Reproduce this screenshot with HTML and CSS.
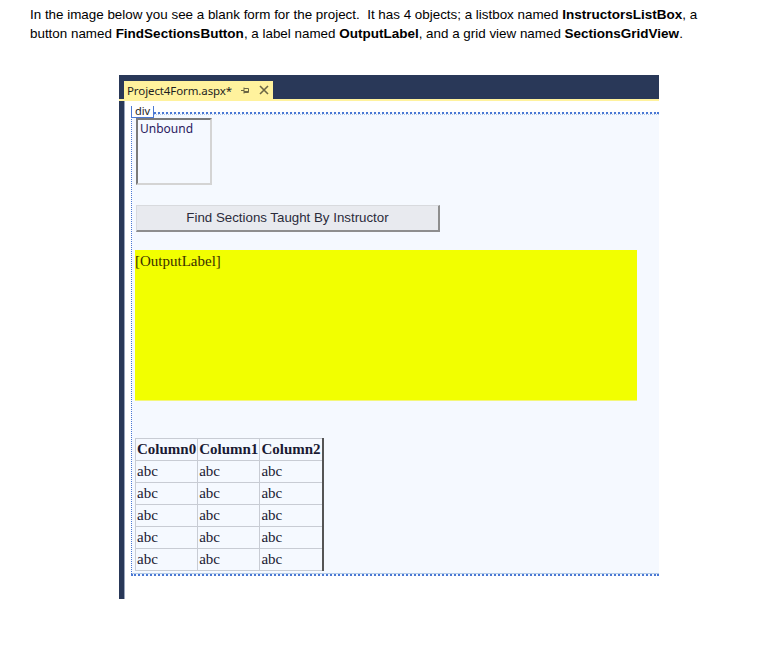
FILE: index.html
```
<!DOCTYPE html>
<html>
<head>
<meta charset="utf-8">
<link rel="stylesheet" href="styles.css">
</head>
<body>
<p class="intro">In the image below you see a blank form for the project.&nbsp; It has 4 objects; a listbox named <b>InstructorsListBox</b>, a<br>button named <b>FindSectionsButton</b>, a label named <b>OutputLabel</b>, and a grid view named <b>SectionsGridView</b>.</p>
<div class="frame">
  <div class="topbar">
    <div class="tab">
      <span class="tab-title">Project4Form.aspx*</span>
      <svg class="pin" width="9" height="9" viewBox="0 0 9 9"><path d="M0 4.5H3M3 1.5V7.5M3 2.5H7.5V6.5H3M3 5.5H7.5" fill="none" stroke="#6b6645" stroke-width="1"/></svg>
      <svg class="close" width="10" height="10" viewBox="0 0 10 10"><path d="M1 1L9 9M9 1L1 9" stroke="#6b6645" stroke-width="1.6"/></svg>
    </div>
  </div>
  <div class="tabline"></div>
  <div class="main">
    <div class="leftstrip"></div>
    <div class="content">
      <div class="tagrow"><span class="divtag">div</span></div>
      <div class="surface">
        <div class="inner">
          <div class="listbox">Unbound</div>
          <div class="button">Find Sections Taught By Instructor</div>
          <div class="label">[OutputLabel]</div>
          <table class="grid">
            <tr><th>Column0</th><th>Column1</th><th>Column2</th></tr>
            <tr><td>abc</td><td>abc</td><td>abc</td></tr>
            <tr><td>abc</td><td>abc</td><td>abc</td></tr>
            <tr><td>abc</td><td>abc</td><td>abc</td></tr>
            <tr><td>abc</td><td>abc</td><td>abc</td></tr>
            <tr><td>abc</td><td>abc</td><td>abc</td></tr>
          </table>
        </div>
      </div>
    </div>
  </div>
</div>
</body>
</html>
```
FILE: styles.css
```
body {
  margin: 0;
  background: #ffffff;
  font-family: "Liberation Sans", Arial, sans-serif;
}
.intro {
  margin: 0;
  padding: 5px 0 0 30px;
  font-size: 13.4px;
  line-height: 19px;
  color: #000;
}
.intro b {
  font-size: 13.5px;
}
.frame {
  margin: 32px 0 0 119px;
  width: 540px;
}
.topbar {
  height: 24px;
  background: #293858;
  padding-left: 5px;
  display: flex;
  align-items: flex-end;
}
.tab {
  height: 18px;
  width: 149px;
  background: #fff29d;
  display: flex;
  align-items: center;
  padding-left: 3px;
  box-sizing: border-box;
}
.tab-title {
  font-family: "Noto Sans", "Open Sans", sans-serif;
  font-size: 11.5px;
  color: #1e1e1e;
  letter-spacing: -0.1px;
}
.pin {
  margin-left: 9px;
}
.close {
  margin-left: 9px;
}
.tabline {
  height: 2px;
  background: #fff29d;
}
.main {
  display: flex;
  height: 498px;
}
.leftstrip {
  width: 5px;
  background: #293858;
  border-right: 1px solid #9aa6bd;
}
.content {
  flex: 1;
  background: #fff;
  display: flex;
  flex-direction: column;
}
.tagrow {
  height: 11px;
  padding-left: 6px;
  position: relative;
  z-index: 1;
}
.divtag {
  display: inline-block;
  margin-top: -1px;
  height: 11px;
  line-height: 10px;
  padding: 0 3px;
  border: 1px solid #4a78d4;
  border-top: none;
  background: #fff;
  font-family: "Noto Sans", sans-serif;
  font-size: 11px;
  color: #1e1e1e;
}
.surface {
  margin-left: 6px;
  height: 460px;
  background: #f5f9ff;
  border-top: 2px dotted #4a78d4;
  border-left: 1px dotted #4a78d4;
  border-bottom: 2px dotted #4a78d4;
}
.inner {
  height: 100%;
  box-sizing: border-box;
  padding: 3px 0 0 3px;
  border-top: 1px dotted #b8cce6;
  border-bottom: 1px solid #b3cbe8;
  display: flex;
  flex-direction: column;
  align-items: flex-start;
}
.listbox {
  margin-left: 1px;
  width: 76px;
  height: 67px;
  box-sizing: border-box;
  border-top: 2px solid #7a7a7a;
  border-left: 2px solid #7a7a7a;
  border-right: 2px solid #d4d4d4;
  border-bottom: 2px solid #d4d4d4;
  background: #f5f9ff;
  font-family: "Noto Sans", sans-serif;
  font-size: 12px;
  line-height: 17px;
  padding-left: 2px;
  color: #2a2060;
}
.button {
  margin-top: 20px;
  margin-left: 1px;
  width: 304px;
  height: 27px;
  box-sizing: border-box;
  background: #e8eaef;
  border-top: 1px solid #d8dade;
  border-left: 1px solid #d8dade;
  border-right: 2px solid #8e8e8e;
  border-bottom: 2px solid #8e8e8e;
  font-family: "Liberation Sans", Arial, sans-serif;
  font-size: 13.3px;
  line-height: 24px;
  text-align: center;
  color: #2b2b3b;
}
.label {
  margin-top: 18px;
  width: 502px;
  height: 151px;
  background: #f2ff00;
  border-bottom: 1px solid #f4f77a;
  box-sizing: border-box;
  font-family: "Liberation Serif", "Times New Roman", serif;
  font-size: 15px;
  line-height: 22px;
  color: #3a3000;
}
.grid {
  margin-top: 37px;
  border-collapse: collapse;
  font-family: "Liberation Serif", "Times New Roman", serif;
  font-size: 15px;
  color: #1a1a33;
  border-right: 2px solid #555;
  border-left: 1px solid #c8ccd4;
}
.grid th, .grid td {
  border: 1px solid #c8ccd4;
  height: 21px;
  padding: 0 1px 0 1px;
  text-align: left;
}
.grid th {
  width: 59px;
  font-weight: bold;
}
.grid td {
  width: 59px;
}
.grid tr > :last-child {
  border-right: 2px solid #555;
}
```
